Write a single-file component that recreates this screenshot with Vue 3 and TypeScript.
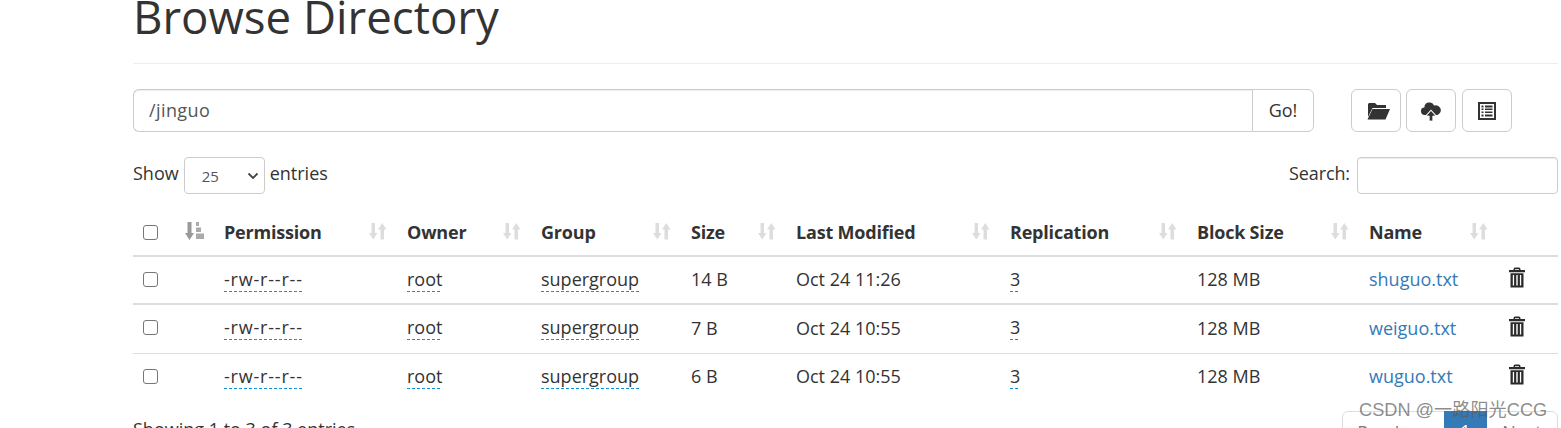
<script setup lang="ts">
interface FileRow { perm: string; owner: string; group: string; size: string; modified: string; repl: string; block: string; name: string }
const rows: FileRow[] = [
  { perm: '-rw-r--r--', owner: 'root', group: 'supergroup', size: '14 B', modified: 'Oct 24 11:26', repl: '3', block: '128 MB', name: 'shuguo.txt' },
  { perm: '-rw-r--r--', owner: 'root', group: 'supergroup', size: '7 B', modified: 'Oct 24 10:55', repl: '3', block: '128 MB', name: 'weiguo.txt' },
  { perm: '-rw-r--r--', owner: 'root', group: 'supergroup', size: '6 B', modified: 'Oct 24 10:55', repl: '3', block: '128 MB', name: 'wuguo.txt' },
]
const heads: { label: string; width: number }[] = [
  { label: 'Permission', width: 183 },
  { label: 'Owner', width: 134 },
  { label: 'Group', width: 150 },
  { label: 'Size', width: 105 },
  { label: 'Last Modified', width: 214 },
  { label: 'Replication', width: 187 },
  { label: 'Block Size', width: 172 },
  { label: 'Name', width: 139 },
]
</script>

<template>
  <div class="page">
    <div class="inner">
      <h1 class="title">Browse Directory</h1>
      <hr class="rule" />
      <div class="pathbar">
        <div class="pathgroup">
          <input class="pathinput" value="/jinguo" />
          <button class="gobtn">Go!</button>
        </div>
        <div class="tools">
          <button class="tool">
            <svg class="folder" width="24" height="18" viewBox="0 0 24 18"><path d="M3 1h6l2 2h9v3H6.500L2 15V2z" fill="#333"/><path d="M6.500 7H24l-4.500 10.500H1.500z" fill="#333"/></svg>
          </button>
          <button class="tool">
            <svg width="20" height="20" viewBox="0 0 20 20"><path d="M5 14H4a3.500 3.500 0 0 1-.6-7.400A5 5 0 0 1 13 4.500a4.700 4.700 0 0 1 3.500 9.500H15l-5-5.500z" fill="#333"/><path d="M10 9.500l5 5.500h-3.200v5H8.200v-5H5z" fill="#333" stroke="#fff" stroke-width="0.8"/></svg>
          </button>
          <button class="tool">
            <svg width="18" height="18" viewBox="0 0 18 18"><path fill-rule="evenodd" d="M0 0h18v18H0zM2 2v14h14V2z" fill="#333"/><path d="M3.500 3.500h2v2h-2zM7 3.500h7.500v2H7zM3.500 6.500h2V8h-2zM7 6.500h7.500V8H7zM3.500 9.500h2V11h-2zM7 9.500h7.500V11H7zM3.500 12.500h2v2h-2zM7 12.500h7.500v2H7z" fill="#333"/></svg>
          </button>
        </div>
      </div>

      <div class="controls">
        <label class="length">Show
          <span class="selectbox">25
            <svg width="12" height="8" viewBox="0 0 12 8"><path d="M1.500 1.500 6 6l4.500-4.500" fill="none" stroke="#444" stroke-width="1.800"/></svg>
          </span>
          <span class="entries">entries</span></label>
        <label class="search">Search: <input class="searchinput" /></label>
      </div>

      <table class="tbl">
        <colgroup>
          <col style="width: 43px" />
          <col style="width: 38px" />
          <col v-for="h in heads" :key="h.label" :style="{ width: h.width + 'px' }" />
          <col />
        </colgroup>
        <thead>
          <tr>
            <th><span class="check"></span></th>
            <th class="sortonly">
              <svg class="sort" width="19" height="18" viewBox="0 0 19 18"><path d="M2.500 0h4v11H9l-4.500 7L0 11h2.500z" fill="#999"/><path d="M11 0h3v4h-3zM11 5.500h5v4.500h-5zM11 11.500h8V17h-8z" fill="#aaa"/></svg>
            </th>
            <th v-for="h in heads" :key="h.label">
              <span class="headcell">{{ h.label }}
                <svg class="sort" width="18" height="18" viewBox="0 0 18 18"><path d="M2.500 1h3.500v10h2.500l-4.250 6.500L0 11h2.500zM11.500 17.500V7.500H9L13.250 1 17.500 7.500H15v10z" fill="#ddd"/></svg>
              </span>
            </th>
            <th></th>
          </tr>
        </thead>
        <tbody>
          <tr v-for="r in rows" :key="r.name">
            <td><span class="check"></span></td>
            <td></td>
            <td><span class="dotted perm">{{ r.perm }}</span></td>
            <td><span class="dotted">{{ r.owner }}</span></td>
            <td><span class="dotted">{{ r.group }}</span></td>
            <td>{{ r.size }}</td>
            <td>{{ r.modified }}</td>
            <td><span class="dotted">{{ r.repl }}</span></td>
            <td>{{ r.block }}</td>
            <td><a class="link">{{ r.name }}</a></td>
            <td>
              <svg class="trash" width="18" height="21" viewBox="0 0 18 21"><path d="M5.500 3V2.200C5.500 1 6.500.5 7.500.5h3c1 0 2 .5 2 1.700V3H17v2.200H1V3zM7 2.200V3h4v-.8z" fill="#2b2b2b"/><path fill-rule="evenodd" d="M2.500 6.200h13V20.500h-13zM4.800 8v10.500h1.300V8zM8.300 8v10.500h1.400V8zM11.900 8v10.500h1.300V8z" fill="#2b2b2b"/></svg>
            </td>
          </tr>
        </tbody>
      </table>

      <div class="footer">
        <div class="info">Showing 1 to 3 of 3 entries</div>
        <div class="pager">
          <span class="pg prev">Previous</span>
          <span class="pg active">1</span>
          <span class="pg next">Next</span>
        </div>
      </div>
    </div>
    <div class="watermark">CSDN @一路阳光CCG</div>
  </div>
</template>

<style>
html, body { margin: 0; background: #fff; overflow: hidden; }
</style>

<style scoped>
.page {
  position: relative;
  width: 1561px;
  height: 428px;
  overflow: hidden;
  font-family: "Open Sans", "Noto Sans CJK SC", sans-serif;
  font-size: 18px;
  color: #333;
}
.inner { margin-left: 133px; width: 1425px; }
.title {
  margin: -14px 0 0;
  font-size: 45.6px;
  line-height: 60px;
  font-weight: 400;
  color: #333;
}
.rule { margin: 17px 0 25px; border: 0; border-top: 1px solid #eee; }
.pathbar { display: flex; align-items: center; height: 43px; }
.pathgroup { display: flex; width: 1181px; height: 43px; }
.pathinput {
  flex: 1;
  min-width: 0;
  box-sizing: border-box;
  border: 1px solid #ccc;
  border-right: 0;
  border-radius: 6px 0 0 6px;
  padding: 0 15px 2px;
  font: inherit;
  letter-spacing: 0.4px;
  color: #555;
  box-shadow: inset 0 1px 1px rgba(0,0,0,.075);
}
.gobtn {
  width: 62px;
  box-sizing: border-box;
  border: 1px solid #ccc;
  border-radius: 0 6px 6px 0;
  background: #fff;
  font: inherit;
  color: #333;
  padding: 0 0 2px;
}
.tools { display: flex; gap: 5px; margin-left: 37px; }
.tool {
  width: 50px;
  height: 43px;
  box-sizing: border-box;
  border: 1px solid #ccc;
  border-radius: 6px;
  background: #fff;
  display: flex;
  align-items: center;
  justify-content: center;
  padding: 0;
}
.tool:last-child { margin-left: 1px; }
.folder { margin-left: 4px; }
.controls {
  display: flex;
  justify-content: space-between;
  align-items: center;
  margin-top: 25px;
  height: 37px;
}
.length, .search { display: flex; align-items: flex-start; line-height: 33px; }
.length { gap: 5px; }
.selectbox {
  display: flex;
  align-items: center;
  justify-content: space-between;
  box-sizing: border-box;
  width: 81px;
  height: 37px;
  border: 1px solid #ccc;
  border-radius: 4px;
  padding: 1px 5px 0 17px;
  font-size: 15px;
  color: #555;
}
.search { gap: 7px; letter-spacing: -0.1px; }
.searchinput {
  width: 201px;
  height: 37px;
  box-sizing: border-box;
  border: 1px solid #ccc;
  border-radius: 4px;
  box-shadow: inset 0 1px 1px rgba(0,0,0,.075);
}
.tbl {
  width: 1425px;
  table-layout: fixed;
  border-collapse: collapse;
  margin-top: 13px;
}
.tbl th {
  height: 49px;
  box-sizing: border-box;
  padding: 2px 10px 0;
  text-align: left;
  font-weight: 700;
  letter-spacing: -0.2px;
  border-bottom: 2px solid #ddd;
  vertical-align: middle;
}
.tbl td {
  height: 48px;
  box-sizing: border-box;
  padding: 0 10px 2px;
  line-height: 24px;
  border-bottom: 2px solid #ddd;
  vertical-align: middle;
}
.tbl tbody tr:nth-child(2) td { height: 49px; border-bottom-width: 1px; }
.tbl tbody tr:last-child td { border-bottom: 0; }
.headcell { display: flex; justify-content: space-between; align-items: center; }
.sortonly { padding-left: 9px !important; }
.sort { display: block; margin-top: -2px; }
.check {
  display: block;
  width: 13px;
  height: 13px;
  border: 1px solid #767676;
  border-radius: 3px;
}
.dotted {
  display: inline-block;
  line-height: 24px;
  height: 25px;
  background-image: repeating-linear-gradient(90deg, #0a94d8 0 3px, transparent 3px 5px);
  background-size: 100% 1px;
  background-position: left bottom;
  background-repeat: no-repeat;
}
.perm { letter-spacing: 0.8px; }
.link { color: #337ab7; }
.trash { display: block; margin-top: -3px; }
.footer { display: flex; justify-content: space-between; margin-top: 16px; }
.info { line-height: 25px; }
.pager {
  display: flex;
  height: 43px;
  box-sizing: border-box;
  border: 1px solid #ddd;
  border-radius: 6px;
  margin-top: -6px;
  width: 216px;
}
.pg { display: block; line-height: 41px; text-align: center; box-sizing: border-box; }
.prev { width: 101px; color: #777; }
.next { flex: 1; color: #777; }
.active { background: #337ab7; color: #fff; width: 43px; margin-top: -1px; height: 43px; }
.watermark {
  position: absolute;
  left: 1359px;
  top: 398px;
  font-size: 18.2px;
  line-height: 24px;
  color: rgba(90, 90, 90, 0.7);
  font-family: "Liberation Sans", "Noto Sans CJK SC", sans-serif;
}
</style>
